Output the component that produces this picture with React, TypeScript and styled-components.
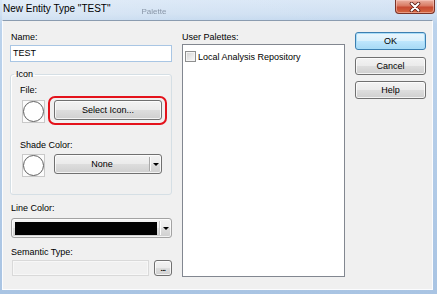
import React from "react";
import styled, { createGlobalStyle, css } from "styled-components";

const Global = createGlobalStyle`
  html, body { margin: 0; padding: 0; background: #b4cde8; }
  body { font-family: "Liberation Sans", Arial, sans-serif; font-size: 9px; color: #000; }
  * { box-sizing: border-box; }
`;

const Frame = styled.div`
  width: 437px;
  height: 294px;
  display: flex;
  flex-direction: column;
  padding: 0 4px 4px 2px;
  background: linear-gradient(180deg, #d9e7f6 0px, #cfe0f2 14px, #bcd3ec 24px, #a9c4e3 100%);
`;

const TitleBar = styled.div`
  height: 20px;
  flex: none;
  display: flex;
  align-items: flex-start;
  background: linear-gradient(90deg, rgba(255,255,255,0.25) 0%, rgba(255,255,255,0.1) 40%, rgba(255,255,255,0) 100%);
`;

const Title = styled.div`
  padding: 3px 0 0 1px;
  font-size: 10px;
  line-height: 12px;
  white-space: nowrap;
`;

const Ghost = styled.div`
  margin: 7px 0 0 31px;
  font-size: 8px;
  line-height: 9px;
  color: rgba(40, 50, 70, 0.45);
  filter: blur(0.7px);
`;

const CloseButton = styled.div`
  margin-left: auto;
  margin-right: -2px;
  width: 40px;
  height: 14px;
  display: flex;
  align-items: center;
  justify-content: center;
  border: 1px solid #7a3328;
  border-top: none;
  border-radius: 0 0 4px 4px;
  background: linear-gradient(180deg, #eab0a2 0%, #d97a63 45%, #c74a33 55%, #d4663e 100%);
  box-shadow: inset 0 0 0 1px rgba(255, 210, 200, 0.5);
`;

const Client = styled.div`
  flex: 1;
  display: flex;
  gap: 10px;
  padding: 10px 6px 0 7px;
  background: #f0f0f0;
  border: 1px solid #fbfcfe;
  border-top-color: #8b9cb0;
`;

const Column = styled.div<{ $w: number }>`
  width: ${(p) => p.$w}px;
  flex: none;
  display: flex;
  flex-direction: column;
`;

const Label = styled.div<{ $indent?: number; $mt?: number }>`
  height: 12px;
  line-height: 12px;
  white-space: nowrap;
  margin-left: ${(p) => p.$indent ?? 0}px;
  margin-top: ${(p) => p.$mt ?? 0}px;
`;

const TextInput = styled.div`
  margin-top: 2px;
  height: 17px;
  border: 1px solid #a9c6e4;
  background: #fff;
  padding-left: 2px;
  line-height: 15px;
`;

const Group = styled.fieldset`
  margin: 6px 0 0;
  padding: 0;
  min-width: 0;
  border: 1px solid #d5dfe5;
  border-radius: 3px;
  box-shadow: inset 1px 1px 0 #fff;
`;

const Legend = styled.legend`
  padding: 0 2px;
  margin-left: 3px;
  font-size: 9px;
  line-height: 12px;
`;

const GroupBody = styled.div`
  padding: 4px 0 17px 9px;
  display: flex;
  flex-direction: column;
`;

const Row = styled.div<{ $mt: number; $indent: number; $gap: number }>`
  display: flex;
  align-items: flex-start;
  margin-top: ${(p) => p.$mt}px;
  margin-left: ${(p) => p.$indent}px;
  gap: ${(p) => p.$gap}px;
`;

const SwatchBox = styled.div`
  width: 23px;
  height: 23px;
  flex: none;
  border: 1px solid #c9c9c9;
  background: #fbfbfb;
  display: flex;
  align-items: center;
  justify-content: center;
`;

const Circle = styled.div`
  width: 21px;
  height: 21px;
  border-radius: 50%;
  border: 1px solid #5e5e5e;
  background: #fff;
`;

const buttonBase = css`
  border: 1px solid #707070;
  border-radius: 3px;
  background: linear-gradient(180deg, #f3f3f3 0%, #ebebeb 48%, #dddddd 52%, #cfcfcf 100%);
  box-shadow: inset 0 0 0 1px rgba(255, 255, 255, 0.75);
`;

const PushButton = styled.div<{ $w: number; $h: number; $default?: boolean; $highlight?: boolean }>`
  ${buttonBase}
  position: relative;
  width: ${(p) => p.$w}px;
  height: ${(p) => p.$h}px;
  flex: none;
  display: flex;
  align-items: center;
  justify-content: center;
  line-height: 12px;
  white-space: nowrap;
  ${(p) =>
    p.$default &&
    css`
      border-color: #3c7fb1;
      background: linear-gradient(180deg, #eaf6fd 0%, #d9f0fc 48%, #bee6fd 52%, #a7d9f5 100%);
      box-shadow: inset 0 0 0 1px #a9ddf8;
    `}
  ${(p) =>
    p.$highlight &&
    css`
      &::after {
        content: "";
        position: absolute;
        left: -7px;
        right: -6px;
        top: -5px;
        bottom: -6px;
        border: 2px solid #e4121b;
        border-radius: 7px;
      }
    `}
`;

const Dropdown = styled.div<{ $w: number }>`
  ${buttonBase}
  width: ${(p) => p.$w}px;
  height: 20px;
  flex: none;
  display: flex;
  align-items: stretch;
`;

const DropText = styled.div`
  flex: 1;
  display: flex;
  align-items: center;
  justify-content: center;
  line-height: 12px;
`;

const DropDivider = styled.div`
  width: 2px;
  margin: 2px 0;
  border-left: 1px solid #a8a8a8;
  border-right: 1px solid #fafafa;
`;

const DropArrow = styled.div`
  width: 10px;
  display: flex;
  align-items: center;
  justify-content: center;
  &::before {
    content: "";
    border-left: 3px solid transparent;
    border-right: 3px solid transparent;
    border-top: 3px solid #000;
  }
`;

const ColorCombo = styled.div`
  ${buttonBase}
  border-color: #a3a3a3;
  margin: 4px 0 0 1px;
  width: 161px;
  height: 20px;
  display: flex;
  align-items: stretch;
  padding: 3px 0 2px 3px;
`;

const ColorFill = styled.div<{ $color: string }>`
  flex: 1;
  background: ${(p) => p.$color};
  margin-right: 2px;
`;

const ColorDivider = styled.div`
  width: 2px;
  margin: -1px 0 0;
  border-left: 1px solid #c4c4c4;
  border-right: 1px solid #fdfdfd;
`;

const DisabledInput = styled.div`
  width: 137px;
  height: 16px;
  border: 1px solid #d9d9d9;
  background: #f0f0f0;
  box-shadow: inset 0 0 0 1px #f7f7f7;
`;

const Dots = styled.div`
  ${buttonBase}
  width: 18px;
  height: 16px;
  display: flex;
  align-items: flex-end;
  justify-content: center;
  padding-bottom: 2px;
  font-size: 8px;
  line-height: 8px;
  font-weight: bold;
  letter-spacing: -0.5px;
`;

const ListBox = styled.div`
  margin-top: 1px;
  height: 233px;
  border: 1px solid #828790;
  background: #fff;
  padding: 6px 0 0 2px;
`;

const ListItem = styled.div`
  display: flex;
  align-items: center;
  gap: 2px;
  line-height: 12px;
  height: 11px;
`;

const CheckBox = styled.div`
  width: 11px;
  height: 11px;
  flex: none;
  border: 1px solid #8e8f8f;
  background: linear-gradient(135deg, #d2d2d2 0%, #ebebeb 60%, #fafafa 100%);
  box-shadow: inset 0 0 0 1px #f4f4f4;
`;

const ButtonStack = styled.div`
  padding-top: 1px;
  display: flex;
  flex-direction: column;
  gap: 6.5px;
`;

export default function App() {
  return (
    <>
      <Global />
      <Frame>
        <TitleBar>
          <Title>New Entity Type "TEST"</Title>
          <Ghost>Palette</Ghost>
          <CloseButton>
            <svg width="12" height="10" viewBox="0 0 12 10">
              <path d="M2.5 1.5 L9.5 8.5 M9.5 1.5 L2.5 8.5" stroke="#5a1a12" strokeWidth="3.6" strokeLinecap="round" />
              <path d="M2.5 1.5 L9.5 8.5 M9.5 1.5 L2.5 8.5" stroke="#fff" strokeWidth="2" strokeLinecap="round" />
            </svg>
          </CloseButton>
        </TitleBar>
        <Client>
          <Column $w={162}>
            <Label $indent={1}>Name:</Label>
            <TextInput>TEST</TextInput>
            <Group>
              <Legend>Icon</Legend>
              <GroupBody>
                <Label>File:</Label>
                <Row $mt={4} $indent={2} $gap={9}>
                  <SwatchBox>
                    <Circle />
                  </SwatchBox>
                  <PushButton $w={108} $h={20} $highlight>
                    Select Icon...
                  </PushButton>
                </Row>
                <Label $mt={16}>Shade Color:</Label>
                <Row $mt={3} $indent={2} $gap={9}>
                  <SwatchBox>
                    <Circle />
                  </SwatchBox>
                  <Dropdown $w={108}>
                    <DropText>None</DropText>
                    <DropDivider />
                    <DropArrow />
                  </Dropdown>
                </Row>
              </GroupBody>
            </Group>
            <Label $indent={1} $mt={7}>Line Color:</Label>
            <ColorCombo>
              <ColorFill $color="#000" />
              <ColorDivider />
              <DropArrow />
            </ColorCombo>
            <Label $indent={1} $mt={8}>Semantic Type:</Label>
            <Row $mt={2} $indent={2} $gap={5}>
              <DisabledInput />
              <Dots>...</Dots>
            </Row>
          </Column>
          <Column $w={163}>
            <Label>User Palettes:</Label>
            <ListBox>
              <ListItem>
                <CheckBox />
                <span>Local Analysis Repository</span>
              </ListItem>
            </ListBox>
          </Column>
          <Column $w={71}>
            <ButtonStack>
              <PushButton $w={71} $h={18} $default>OK</PushButton>
              <PushButton $w={71} $h={18}>Cancel</PushButton>
              <PushButton $w={71} $h={18}>Help</PushButton>
            </ButtonStack>
          </Column>
        </Client>
      </Frame>
    </>
  );
}
